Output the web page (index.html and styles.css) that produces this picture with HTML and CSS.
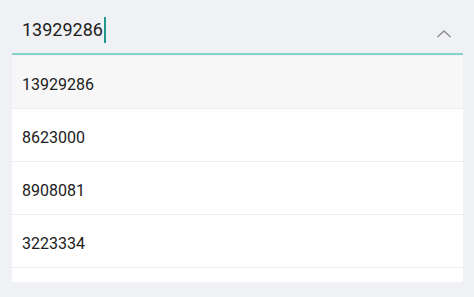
FILE: index.html
```html
<!DOCTYPE html>
<html lang="en">
<head>
    <meta charset="UTF-8">
    <meta name="viewport" content="width=device-width, initial-scale=1.0">
    <title>Number search</title>
    <link rel="stylesheet" href="styles.css">
</head>
<body>
    <div class="combo">
        <!-- Campo de búsqueda -->
        <div class="combo-field">
            <span class="combo-value">13929286</span><span class="caret"></span>
            <svg class="chevron" width="16" height="10" viewBox="0 0 16 10">
                <path d="M1.5 8 L8 2 L14.5 8" fill="none" stroke="#8c8c8c" stroke-width="1.4"/>
            </svg>
        </div>

        <!-- Sugerencias -->
        <ul class="combo-list">
            <li class="active">13929286</li>
            <li>8623000</li>
            <li>8908081</li>
            <li>3223334</li>
            <li></li>
        </ul>
    </div>
</body>
</html>
```

FILE: styles.css
```css
html, body {
    height: 100%;
}
body {
    margin: 0;
    background-color: #f0f1f5;
    font-family: Roboto, "Noto Sans", Arial, sans-serif;
    color: #212121;
}
.combo {
    padding: 0 11px 0 12px;
}
.combo-field {
    display: flex;
    align-items: flex-start;
    height: 36px;
    padding: 17px 11px 0 10px;
    border-bottom: 2px solid #86d3c9;
}
.combo-value {
    font-size: 18px;
    line-height: 26px;
}
.caret {
    width: 2px;
    height: 26px;
    margin-left: 1px;
    background-color: #1f9a8a;
}
.chevron {
    margin-left: auto;
    margin-top: 12px;
}
.combo-list {
    list-style: none;
    margin: 1px 0 0;
    padding: 0;
    height: 226px;
    overflow: hidden;
    background-color: #fff;
}
.combo-list li {
    height: 46px;
    line-height: 46px;
    padding: 6px 10px 0;
    font-size: 16px;
    border-bottom: 1px solid #ececee;
}
.combo-list li.active {
    background-color: #f7f7f7;
}
```
